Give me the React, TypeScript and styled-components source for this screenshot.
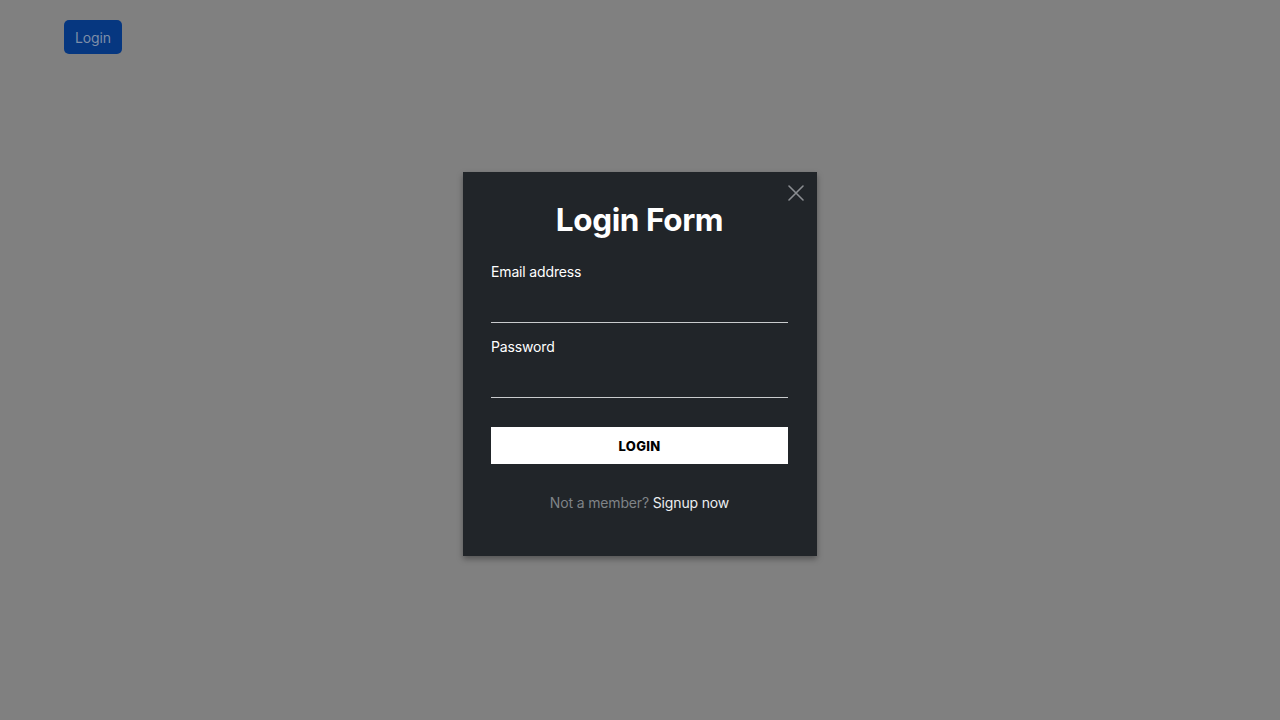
import styled, { createGlobalStyle } from 'styled-components';

const GlobalStyle = createGlobalStyle`
  html, body {
    margin: 0;
    padding: 0;
    background: #808080;
    font-family: Inter, "Liberation Sans", sans-serif;
  }
`;

function CloseIcon(): JSX.Element {
  return (
    <svg width="16" height="16" viewBox="0 0 16 16" fill="none">
      <path d="M1 1L15 15M15 1L1 15" stroke="currentColor" strokeWidth="1.6" strokeLinecap="round" />
    </svg>
  );
}

function App(): JSX.Element {
  return (
    <>
      <GlobalStyle />
      <Page>
        <TopBar>
          <OpenButton type="button">Login</OpenButton>
        </TopBar>
        <Backdrop>
          <Modal>
            <CloseButton type="button" aria-label="Close">
              <CloseIcon />
            </CloseButton>
            <Title>Login Form</Title>
            <Field>
              <Label>Email address</Label>
              <Input type="email" />
            </Field>
            <Field>
              <Label>Password</Label>
              <Input type="password" />
            </Field>
            <SubmitButton type="button">LOGIN</SubmitButton>
            <Footer>
              Not a member? <FooterLink>Signup now</FooterLink>
            </Footer>
          </Modal>
        </Backdrop>
      </Page>
    </>
  );
}

export default App;

const Page = styled.div`
  width: 1280px;
  height: 720px;
  background: #808080;
  display: flex;
  flex-direction: column;
  overflow: hidden;
`;

const TopBar = styled.div`
  padding: 20px 64px 0;
  display: flex;
`;

const OpenButton = styled.button`
  height: 34px;
  padding: 0 11px;
  border: none;
  border-radius: 5px;
  background: #063780;
  color: #7e8ea8;
  font-family: Inter, "Liberation Sans", sans-serif;
  font-size: 14px;
  letter-spacing: -0.15px;
`;

const Backdrop = styled.div`
  display: flex;
  justify-content: center;
  padding-top: 118px;
`;

const Modal = styled.div`
  position: relative;
  width: 354px;
  box-sizing: border-box;
  padding: 29px 29px 43px 28px;
  background: #212529;
  box-shadow: 0 3px 6px rgba(0, 0, 0, 0.35);
  display: flex;
  flex-direction: column;
`;

const CloseButton = styled.button`
  position: absolute;
  top: 12px;
  right: 12px;
  width: 18px;
  height: 18px;
  padding: 0;
  border: none;
  background: transparent;
  color: #8a8d91;
  display: flex;
  align-items: center;
  justify-content: center;
`;

const Title = styled.h1`
  margin: 0 0 23px;
  font-size: 31.5px;
  line-height: 38px;
  font-weight: 700;
  color: #ffffff;
  text-align: center;
  letter-spacing: -0.4px;
`;

const Field = styled.div`
  display: flex;
  flex-direction: column;
  & + & {
    margin-top: 14px;
  }
`;

const Label = styled.label`
  font-size: 14px;
  line-height: 20px;
  color: #ffffff;
  letter-spacing: -0.15px;
`;

const Input = styled.input`
  height: 41px;
  box-sizing: border-box;
  border: none;
  border-bottom: 1px solid #c9cbcd;
  background: transparent;
  color: #ffffff;
  outline: none;
  padding: 0;
`;

const SubmitButton = styled.button`
  margin-top: 29px;
  height: 37px;
  border: none;
  background: #ffffff;
  color: #000000;
  font-family: Inter, "Liberation Sans", sans-serif;
  font-size: 13px;
  font-weight: 800;
  letter-spacing: 0.3px;
`;

const Footer = styled.p`
  margin: 29px 0 0;
  font-size: 14px;
  line-height: 20px;
  color: #7f8387;
  text-align: center;
  letter-spacing: -0.15px;
`;

const FooterLink = styled.a`
  color: #eceef0;
  cursor: pointer;
`;
